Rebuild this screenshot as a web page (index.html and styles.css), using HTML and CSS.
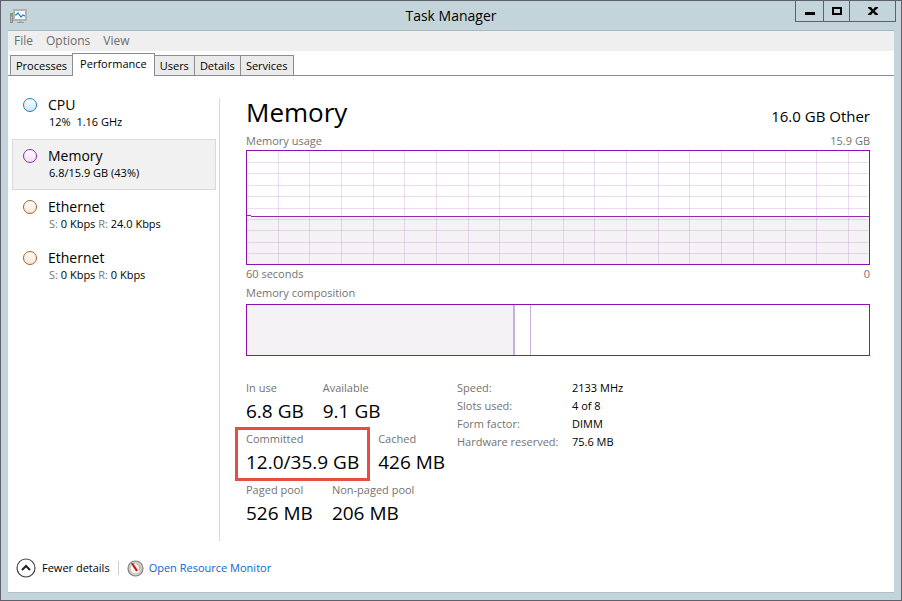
FILE: index.html
```html
<!DOCTYPE html>
<html lang="en">
<head>
    <meta charset="UTF-8">
    <meta name="viewport" content="width=device-width, initial-scale=1.0">
    <title>Task Manager</title>
    <link rel="stylesheet" href="styles.css">
</head>
<body>

    <div class="window">
        <header class="titlebar">
            <svg class="app-icon" width="17" height="15" viewBox="0 0 17 15" aria-hidden="true">
                <rect x="0.5" y="4.5" width="2" height="9" fill="#b9b9b9" stroke="#8d8d8d"/>
                <path d="M1 5h2v2H1z" fill="#4cc24c"/>
                <rect x="4" y="1" width="12" height="10" fill="#f2fbff" stroke="#b3b0ae" stroke-width="2"/>
                <path d="M5 6h1l2-2 3 4 2-2 2 1" fill="none" stroke="#1b87c9" stroke-width="1.200"/>
                <path d="M9 12h3v1H9z" fill="#b5b5b5"/>
                <path d="M7 13h7v1H7z" fill="#9a9a9a"/>
            </svg>
            <h1>Task Manager</h1>
            <div class="window-buttons">
                <button class="minimize" aria-label="Minimize">
                    <svg width="10" height="10" viewBox="0 0 10 10"><path d="M0 6h10v3H0z"/></svg>
                </button>
                <button class="maximize" aria-label="Maximize">
                    <svg width="10" height="10" viewBox="0 0 10 10"><path d="M0 1h10v8H0zM2 3v4h6V3z" fill-rule="evenodd"/></svg>
                </button>
                <button class="close" aria-label="Close">
                    <svg width="10" height="10" viewBox="0 0 10 10"><path d="M0 1h3l2 2.500L7 1h3v1L6.500 5 10 8v1H7L5 6.500 3 9H0V8l3.500-3L0 2z"/></svg>
                </button>
            </div>
        </header>

        <div class="client">
            <nav class="menu">
                <button>File</button>
                <button>Options</button>
                <button>View</button>
            </nav>

            <div class="tabs" role="tablist">
                <button role="tab">Processes</button>
                <button role="tab" class="active" aria-selected="true">Performance</button>
                <button role="tab">Users</button>
                <button role="tab">Details</button>
                <button role="tab">Services</button>
            </div>

            <div class="content">
                <aside class="sidebar">
                    <button class="resource cpu">
                        <span class="dot"></span>
                        <span class="info">
                            <span class="name">CPU</span>
                            <span class="sub">12%&nbsp; 1.16 GHz</span>
                        </span>
                    </button>
                    <button class="resource memory selected">
                        <span class="dot"></span>
                        <span class="info">
                            <span class="name">Memory</span>
                            <span class="sub">6.8/15.9 GB (43%)</span>
                        </span>
                    </button>
                    <button class="resource ethernet">
                        <span class="dot"></span>
                        <span class="info">
                            <span class="name">Ethernet</span>
                            <span class="sub"><i>S:</i> 0 Kbps <i>R:</i> 24.0 Kbps</span>
                        </span>
                    </button>
                    <button class="resource ethernet">
                        <span class="dot"></span>
                        <span class="info">
                            <span class="name">Ethernet</span>
                            <span class="sub"><i>S:</i> 0 Kbps <i>R:</i> 0 Kbps</span>
                        </span>
                    </button>
                </aside>

                <main class="details">
                    <div class="heading">
                        <h2>Memory</h2>
                        <span class="total">16.0 GB Other</span>
                    </div>

                    <div class="caption"><span>Memory usage</span><span>15.9 GB</span></div>
                    <div class="usage">
                        <svg viewBox="0 0 622 113" preserveAspectRatio="none" aria-hidden="true">
                            <path class="area" d="M0 65H622V113H0z"/>
                            <path class="grid" d="M0 11.500H621M0 22.500H621M0 34.500H621M0 45.500H621M0 57.500H621M0 68.500H621M0 79.500H621M0 91.500H621M0 102.500H621"/>
                            <path class="grid" d="M31.500 0V113M62.500 0V113M94.500 0V113M126.500 0V113M157.500 0V113M189.500 0V113M221.500 0V113M252.500 0V113M284.500 0V113M316.500 0V113M347.500 0V113M379.500 0V113M411.500 0V113M442.500 0V113M474.500 0V113M506.500 0V113M538.500 0V113M569.500 0V113M601.500 0V113"/>
                            <path class="line" d="M0 64.500L8 65.500H622"/>
                        </svg>
                    </div>
                    <div class="caption"><span>60 seconds</span><span>0</span></div>

                    <div class="caption composition-caption"><span>Memory composition</span></div>
                    <div class="composition">
                        <div class="in-use" style="width: 43.1%"></div>
                        <div class="modified" style="width: 2.6%"></div>
                    </div>

                    <div class="summary">
                        <div class="stats">
                            <div class="stat-row">
                                <div class="stat"><span>In use</span><b>6.8 GB</b></div>
                                <div class="stat"><span>Available</span><b>9.1 GB</b></div>
                            </div>
                            <div class="stat-row">
                                <div class="stat highlight"><span>Committed</span><b>12.0/35.9 GB</b></div>
                                <div class="stat"><span>Cached</span><b>426 MB</b></div>
                            </div>
                            <div class="stat-row">
                                <div class="stat"><span>Paged pool</span><b>526 MB</b></div>
                                <div class="stat"><span>Non-paged pool</span><b>206 MB</b></div>
                            </div>
                        </div>

                        <table class="hardware">
                            <tr><th scope="row">Speed:</th><td>2133 MHz</td></tr>
                            <tr><th scope="row">Slots used:</th><td>4 of 8</td></tr>
                            <tr><th scope="row">Form factor:</th><td>DIMM</td></tr>
                            <tr><th scope="row">Hardware reserved:</th><td>75.6 MB</td></tr>
                        </table>
                    </div>
                </main>
            </div>

            <footer class="footer">
                <button class="fewer">
                    <svg width="20" height="20" viewBox="0 0 20 20" aria-hidden="true">
                        <circle cx="10" cy="10" r="9" fill="#fff" stroke="#444" stroke-width="1.200"/>
                        <path d="M6 12l4-4 4 4" fill="none" stroke="#222" stroke-width="2"/>
                    </svg>
                    Fewer details
                </button>
                <a class="monitor" href="#">
                    <svg width="17" height="17" viewBox="0 0 17 17" aria-hidden="true">
                        <circle cx="8.500" cy="8.500" r="7.500" fill="#d9d6d1" stroke="#808080" stroke-width="1.200"/>
                        <circle cx="8.500" cy="8.500" r="5.500" fill="#fbfaf7" stroke="#b9b5ae"/>
                        <path d="M10 4.200a4.500 4.500 0 0 1 2 6.500" fill="none" stroke="#e2a070"/>
                        <path d="M4 3.500l2-.5 5 7.500-2 1z" fill="#d11212"/>
                    </svg>
                    <span>Open Resource Monitor</span>
                </a>
            </footer>
        </div>
    </div>

</body>
</html>
```
FILE: styles.css
```css
* {
    box-sizing: border-box;
}
body {
    margin: 0;
    font-family: "Open Sans", "Noto Sans", sans-serif;
    font-size: 11px;
    line-height: 18px;
    color: #000;
}
button {
    font: inherit;
    color: inherit;
    padding: 0;
    border: none;
    background: none;
}
.window {
    display: flex;
    flex-direction: column;
    min-height: 100vh;
    padding: 0 7px 7px;
    border: 1px solid #5f606b;
    background-color: #c3d5da;
}

/* Title bar */
.titlebar {
    display: grid;
    grid-template-columns: 1fr auto 1fr;
    height: 29px;
}
.app-icon {
    margin: 8px 0 0 2px;
}
h1 {
    margin: 0;
    font-size: 14px;
    font-weight: normal;
    line-height: 30px;
}
.window-buttons {
    display: flex;
    justify-self: end;
    height: 21px;
    margin-right: -2px;
    border: 1px solid #5f606b;
    border-top: none;
}
.window-buttons button {
    display: flex;
    align-items: center;
    justify-content: center;
    width: 27px;
}
.window-buttons .maximize {
    border: 1px solid #5f606b;
    border-width: 0 1px;
}
.window-buttons .close {
    width: 45px;
}

/* Menu and tabs */
.client {
    display: flex;
    flex: 1;
    flex-direction: column;
    border-top: 1px solid #a9b8be;
    border-bottom: 1px solid #b4bec2;
    background-color: #fff;
}
.menu {
    display: flex;
    gap: 13px;
    padding: 1px 6px;
    background-color: #efefef;
    color: #6d6d6d;
    font-size: 12px;
}
.tabs {
    display: flex;
    align-items: flex-end;
    height: 25px;
    padding-left: 2px;
    border-bottom: 1px solid #8b8b96;
}
.tabs button {
    height: 20px;
    padding: 0 5px;
    border: 1px solid #8b8b96;
    border-bottom: none;
    background-color: #ebebeb;
}
.tabs button + button {
    margin-left: -1px;
}
.tabs .active {
    height: 23px;
    margin-bottom: -1px;
    padding: 0 7px 3px;
    background-color: #fff;
}

/* Resource list */
.content {
    display: flex;
    flex: 1;
}
.sidebar {
    display: flex;
    flex-direction: column;
    width: 208px;
    padding-top: 12px;
    padding-left: 4px;
}
.resource {
    display: flex;
    gap: 11px;
    padding: 7px 10px 8px;
    border: 1px solid transparent;
    text-align: left;
}
.resource.selected {
    border-color: #dadada;
    background-color: #f1f1f1;
}
.dot {
    width: 14px;
    height: 14px;
    margin-top: 2px;
    border: 1px solid;
    border-radius: 50%;
}
.cpu .dot {
    border-color: #1a7fc0;
    background: linear-gradient(#fff, #cfe5f4);
}
.memory .dot {
    border-color: #9528b4;
    background: linear-gradient(#fff, #f0def5);
}
.ethernet .dot {
    border-color: #a9601f;
    background: linear-gradient(#fff, #fce6d6);
}
.info {
    display: flex;
    flex-direction: column;
}
.name {
    font-size: 14px;
    line-height: 18px;
}
.sub {
    padding-left: 1px;
    line-height: 16px;
}
.sub i {
    font-style: normal;
    color: #777;
}

/* Memory panel */
.details {
    flex: 1;
    margin-top: 22px;
    margin-left: 3px;
    padding-right: 24px;
    padding-left: 26px;
    border-left: 1px solid #d9d9d9;
}
.heading {
    display: flex;
    align-items: baseline;
    justify-content: space-between;
    height: 34px;
    line-height: 28px;
}
h2 {
    margin: 0;
    font-size: 26px;
    font-weight: normal;
}
.total {
    font-size: 15px;
}
.caption {
    display: flex;
    justify-content: space-between;
    color: #737373;
}
.usage {
    height: 115px;
    border: 1px solid #8b12ae;
}
.usage svg {
    display: block;
    width: 100%;
    height: 100%;
}
.usage path {
    fill: none;
    shape-rendering: crispEdges;
    vector-effect: non-scaling-stroke;
}
.usage .area {
    fill: #f4f2f4;
}
.usage .grid {
    stroke: rgba(150, 60, 180, 0.18);
}
.usage .line {
    stroke: #9528b4;
}
.composition-caption {
    padding: 1px 0 2px;
}
.composition {
    display: flex;
    height: 52px;
    border: 1px solid #8b12ae;
}
.in-use {
    border-right: 2px solid #ccb0dc;
    background-color: #f4f2f4;
}
.modified {
    border-right: 1px solid #ccb0dc;
}
.summary {
    display: flex;
    align-items: flex-start;
    padding-top: 23px;
}
.stats {
    display: flex;
    flex-direction: column;
    gap: 5px;
    width: 211px;
}
.stat-row {
    display: flex;
    gap: 19px;
}
.stat {
    position: relative;
    display: flex;
    flex-direction: column;
    white-space: nowrap;
}
.stat span {
    color: #737373;
}
.stat b {
    font-size: 19px;
    font-weight: normal;
    line-height: 28px;
}
.highlight::after {
    content: "";
    position: absolute;
    inset: -3px -11px -5px;
    border: 3px solid #e74c45;
}
.hardware {
    border-collapse: collapse;
}
.hardware th {
    width: 115px;
    padding: 0;
    font-weight: normal;
    text-align: left;
    color: #737373;
}
.hardware td {
    padding: 0;
}

/* Footer */
.footer {
    display: flex;
    align-items: center;
    height: 51px;
    padding: 3px 8px 0;
}
.fewer {
    display: flex;
    align-items: center;
    gap: 6px;
}
.monitor {
    display: flex;
    align-items: center;
    gap: 5px;
    color: #0b66d0;
    text-decoration: none;
}
.monitor::before {
    content: "";
    height: 14px;
    margin: 0 3px 0 8px;
    border-left: 1px solid #d0d0d0;
}
```
